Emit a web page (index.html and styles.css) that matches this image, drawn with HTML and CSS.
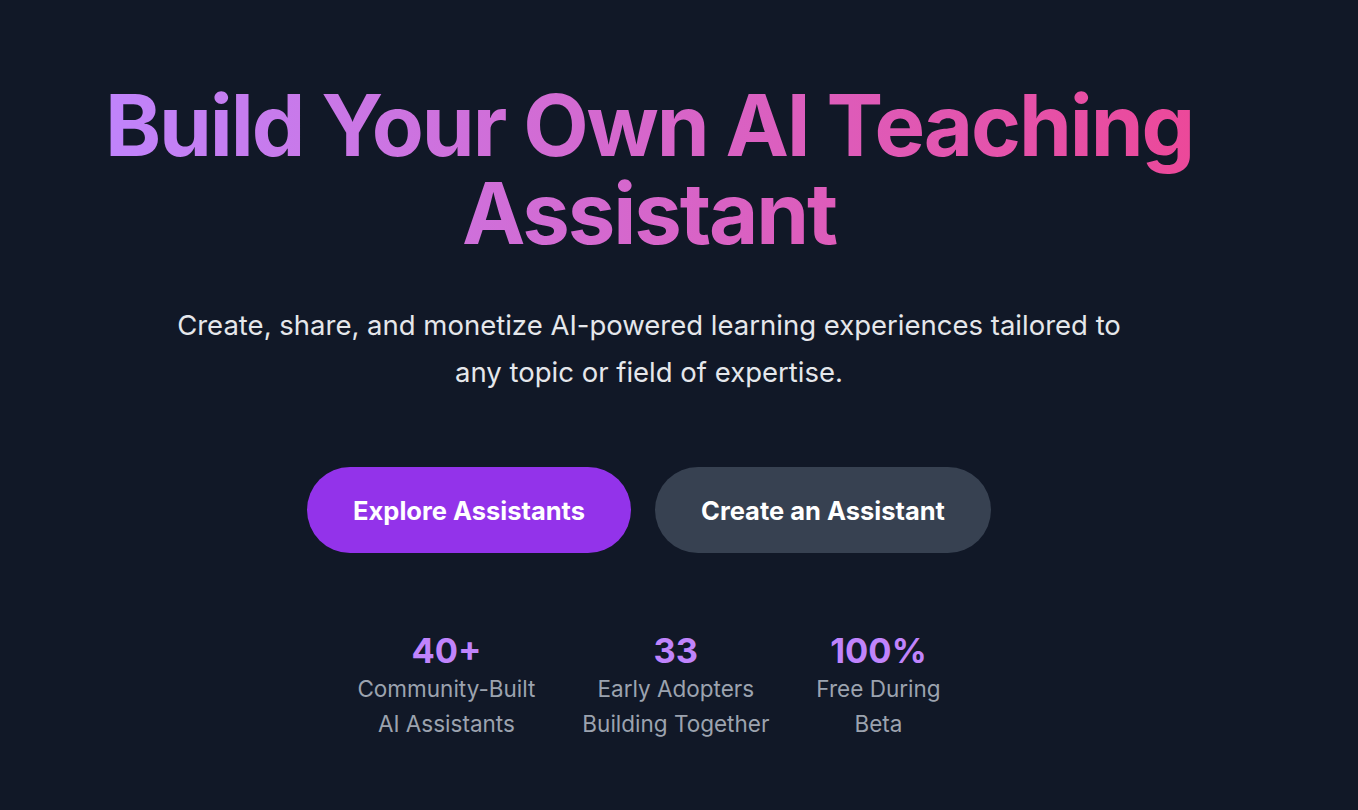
FILE: index.html
```html
<!DOCTYPE html>
<html lang="en">
<head>
<meta charset="utf-8">
<title>Build Your Own AI Teaching Assistant</title>
<link rel="stylesheet" href="styles.css">
</head>
<body>
<main class="hero">
  <h1 class="title">Build Your Own AI Teaching Assistant</h1>
  <p class="subtitle">Create, share, and monetize AI-powered learning experiences tailored to any topic or field of expertise.</p>
  <div class="actions">
    <a class="btn btn-primary" href="#">Explore Assistants</a>
    <a class="btn btn-secondary" href="#">Create an Assistant</a>
  </div>
  <div class="stats">
    <div class="stat">
      <div class="stat-num">40+</div>
      <div class="stat-label">Community-Built<br>AI Assistants</div>
    </div>
    <div class="stat">
      <div class="stat-num">33</div>
      <div class="stat-label">Early Adopters<br>Building Together</div>
    </div>
    <div class="stat">
      <div class="stat-num">100%</div>
      <div class="stat-label">Free During<br>Beta</div>
    </div>
  </div>
</main>
</body>
</html>
```
FILE: styles.css
```css
html, body {
  margin: 0;
  padding: 0;
  background: #111827;
  height: 100%;
}
body {
  font-family: Inter, "Noto Sans", sans-serif;
  overflow: hidden;
}
.hero {
  width: 1298px;
  display: flex;
  flex-direction: column;
  align-items: center;
  text-align: center;
  padding-top: 82px;
}
.title {
  margin: 0;
  width: 1100px;
  font-size: 85px;
  line-height: 88px;
  font-weight: 700;
  letter-spacing: -0.025em;
  background: linear-gradient(90deg, #c084fc 0%, #ec4899 100%);
  -webkit-background-clip: text;
  background-clip: text;
  color: transparent;
}
.subtitle {
  margin: 44px 0 0;
  width: 970px;
  font-size: 27.5px;
  line-height: 47px;
  color: #e5e7eb;
}
.actions {
  display: flex;
  gap: 24px;
  margin-top: 71px;
}
.btn {
  display: flex;
  align-items: center;
  justify-content: center;
  height: 86px;
  padding: 0 46px;
  border-radius: 43px;
  font-size: 25.5px;
  font-weight: 700;
  color: #ffffff;
  text-decoration: none;
}
.btn-primary { background: #9333ea; }
.btn-secondary { background: #374151; }
.stats {
  display: flex;
  gap: 47px;
  margin-top: 78px;
}
.stat {
  display: flex;
  flex-direction: column;
  align-items: center;
}
.stat-num {
  font-size: 34.5px;
  font-weight: 700;
  line-height: 40px;
  color: #c084fc;
}
.stat-label {
  font-size: 22.5px;
  line-height: 35px;
  color: #9ca3af;
}
```
